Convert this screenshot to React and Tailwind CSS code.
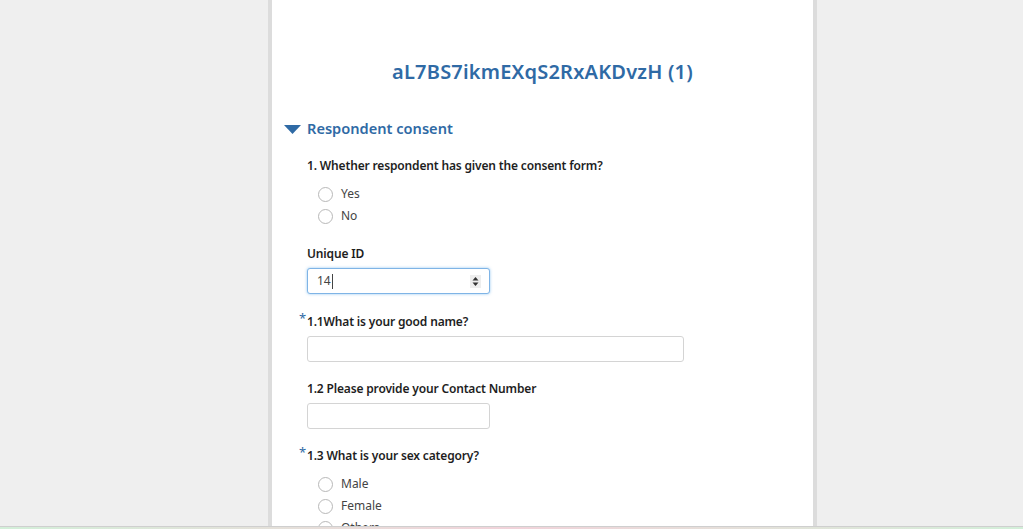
import React from "react";

const font = { fontFamily: '"Noto Sans", "Open Sans", sans-serif' };

function Radio({ label }) {
  return (
    <div className="flex items-center h-[22px] pl-[11px]">
      <span className="w-[15px] h-[15px] rounded-full border-[1.5px] border-[#b8b8b8] bg-white shrink-0" />
      <span className="ml-[8px] text-[12px] text-[#444]">{label}</span>
    </div>
  );
}

function Label({ children, required }) {
  return (
    <div className="relative h-[20px] flex items-center text-[12px] tracking-[-0.16px] font-semibold text-[#1e1e1e]">
      {required && (
        <span className="absolute left-[-8px] top-[-3px] text-[#2f6aa5] text-[13px] font-normal">*</span>
      )}
      {children}
    </div>
  );
}

function TextBox({ width }) {
  return <div className={`h-[26px] ${width} border border-[#d4d4d4] rounded-[3px] bg-white`} />;
}

export default function App() {
  return (
    <div className="relative h-[529px] w-[1023px] overflow-hidden bg-[#efefef]" style={font}>
      <div className="ml-[268px] w-[549px] h-full border-x-4 border-[#dcdcdc] bg-white">
        <div className="pt-[58px] h-[28px] box-content text-center text-[20px] tracking-[0.2px] leading-[28px] font-semibold text-[#2f6aa5]">
          aL7BS7ikmEXqS2RxAKDvzH (1)
        </div>
        <div className="mt-[29px] flex items-center h-[28px] pl-[12px]">
          <svg width="17" height="9" viewBox="0 0 17 9" className="shrink-0">
            <polygon points="0,0 17,0 8.5,9" fill="#2f6aa5" />
          </svg>
          <span className="ml-[6px] text-[14.6px] font-semibold text-[#2f6aa5]">Respondent consent</span>
        </div>
        <div className="pl-[35px]">
          <div className="mt-[13px]"><Label>1. Whether respondent has given the consent form?</Label></div>
          <div className="mt-[7px]">
            <Radio label="Yes" />
            <Radio label="No" />
          </div>
          <div className="mt-[17px]"><Label>Unique ID</Label></div>
          <div className="mt-[4px] relative h-[26px] w-[183px] border border-[#7fb4e6] rounded-[3px] bg-white shadow-[0_0_3px_rgba(102,175,233,0.7)] flex items-center pl-[9px] text-[12px] text-[#444]">
            <span>14</span>
            <span className="w-px h-[15px] bg-[#444] ml-[1px]" />
            <div className="absolute right-[8px] top-[6px] w-[11px] h-[13px] bg-[#eee] flex items-center justify-center">
              <svg width="7" height="11" viewBox="0 0 7 11">
                <polygon points="3.5,1 6.5,4.5 0.5,4.5" fill="#333" />
                <polygon points="3.5,10 6.5,6.5 0.5,6.5" fill="#333" />
              </svg>
            </div>
          </div>
          <div className="mt-[18px]"><Label required>1.1What is your good name?</Label></div>
          <div className="mt-[4px]"><TextBox width="w-[377px]" /></div>
          <div className="mt-[17px]"><Label>1.2 Please provide your Contact Number</Label></div>
          <div className="mt-[4px]"><TextBox width="w-[183px]" /></div>
          <div className="mt-[17px]"><Label required>1.3 What is your sex category?</Label></div>
          <div className="mt-[7px]">
            <Radio label="Male" />
            <Radio label="Female" />
            <Radio label="Others" />
          </div>
        </div>
      </div>
      <div className="absolute left-0 right-0 bottom-0 h-[3px] border-t border-[#cfcfcf] bg-gradient-to-r from-[#d3efd9] via-[#f1d3da] to-[#d3efd9]" />
    </div>
  );
}
